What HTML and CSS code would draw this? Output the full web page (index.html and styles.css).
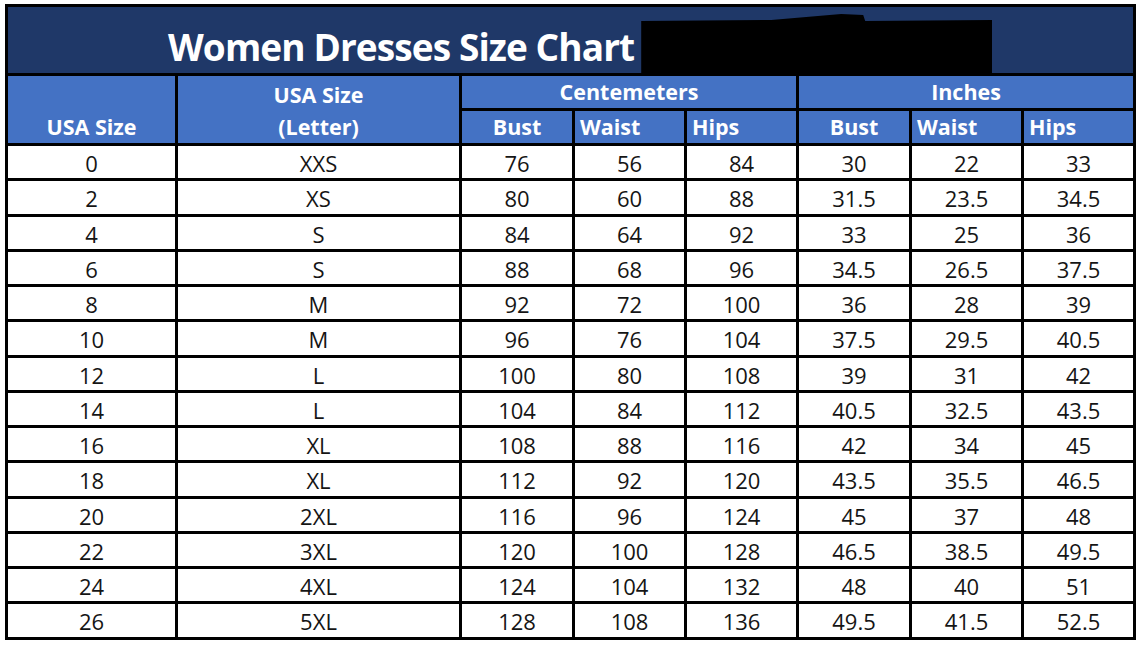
FILE: index.html
```html
<!DOCTYPE html>
<html>
<head>
<meta charset="utf-8">
<title>Women Dresses Size Chart</title>
<link rel="stylesheet" href="styles.css">
</head>
<body>
<div class="sheet">
<table class="chart">
  <colgroup>
    <col class="c-size">
    <col class="c-letter">
    <col class="c-a"><col class="c-b"><col class="c-b">
    <col class="c-a"><col class="c-b"><col class="c-b">
  </colgroup>
  <thead>
    <tr class="title-row">
      <th colspan="8" class="title"><span class="title-text">Women Dresses Size Chart</span><span class="redact"></span></th>
    </tr>
    <tr class="head-row">
      <th rowspan="2" class="h">USA Size</th>
      <th rowspan="2" class="h">USA Size<br>(Letter)</th>
      <th colspan="3" class="h">Centemeters</th>
      <th colspan="3" class="h">Inches</th>
    </tr>
    <tr class="head-row">
      <th class="h">Bust</th>
      <th class="h h-left">Waist</th>
      <th class="h h-left">Hips</th>
      <th class="h">Bust</th>
      <th class="h h-left">Waist</th>
      <th class="h h-left">Hips</th>
    </tr>
  </thead>
  <tbody>
    <tr><td>0</td><td>XXS</td><td>76</td><td>56</td><td>84</td><td>30</td><td>22</td><td>33</td></tr>
    <tr><td>2</td><td>XS</td><td>80</td><td>60</td><td>88</td><td>31.5</td><td>23.5</td><td>34.5</td></tr>
    <tr><td>4</td><td>S</td><td>84</td><td>64</td><td>92</td><td>33</td><td>25</td><td>36</td></tr>
    <tr><td>6</td><td>S</td><td>88</td><td>68</td><td>96</td><td>34.5</td><td>26.5</td><td>37.5</td></tr>
    <tr><td>8</td><td>M</td><td>92</td><td>72</td><td>100</td><td>36</td><td>28</td><td>39</td></tr>
    <tr><td>10</td><td>M</td><td>96</td><td>76</td><td>104</td><td>37.5</td><td>29.5</td><td>40.5</td></tr>
    <tr><td>12</td><td>L</td><td>100</td><td>80</td><td>108</td><td>39</td><td>31</td><td>42</td></tr>
    <tr><td>14</td><td>L</td><td>104</td><td>84</td><td>112</td><td>40.5</td><td>32.5</td><td>43.5</td></tr>
    <tr><td>16</td><td>XL</td><td>108</td><td>88</td><td>116</td><td>42</td><td>34</td><td>45</td></tr>
    <tr><td>18</td><td>XL</td><td>112</td><td>92</td><td>120</td><td>43.5</td><td>35.5</td><td>46.5</td></tr>
    <tr><td>20</td><td>2XL</td><td>116</td><td>96</td><td>124</td><td>45</td><td>37</td><td>48</td></tr>
    <tr><td>22</td><td>3XL</td><td>120</td><td>100</td><td>128</td><td>46.5</td><td>38.5</td><td>49.5</td></tr>
    <tr><td>24</td><td>4XL</td><td>124</td><td>104</td><td>132</td><td>48</td><td>40</td><td>51</td></tr>
    <tr><td>26</td><td>5XL</td><td>128</td><td>108</td><td>136</td><td>49.5</td><td>41.5</td><td>52.5</td></tr>
  </tbody>
</table>
</div>
</body>
</html>
```

FILE: styles.css
```css
html, body {
  margin: 0;
  padding: 0;
  background: #ffffff;
}

.sheet {
  padding: 4px 0 0 5px;
}

.chart {
  border-collapse: collapse;
  table-layout: fixed;
  width: 1131px;
  font-family: "Open Sans", "Liberation Sans", sans-serif;
  border: 3px solid #000;
}

.c-size { width: 170px; }
.c-letter { width: 284px; }
.c-a { width: 113px; }
.c-b { width: 112px; }

.chart th,
.chart td {
  border: 3px solid #000;
  padding: 0;
}

.title-row {
  height: 69px;
}

.chart .title {
  background: #1f3868;
  color: #fff;
  text-align: left;
  vertical-align: bottom;
  padding: 0 0 0 160px;
  white-space: nowrap;
  line-height: 50px;
}

.title-text {
  font-size: 37px;
  font-weight: 700;
  letter-spacing: -0.9px;
  vertical-align: baseline;
  position: relative;
  top: 7px;
}

.redact {
  display: inline-block;
  width: 351px;
  height: 59px;
  margin-left: 7px;
  background: #000;
  vertical-align: bottom;
  clip-path: polygon(0 7px, 130px 6px, 200px 0, 222px 1px, 224px 7px, 351px 6px, 351px 59px, 0 59px);
}

.head-row {
  height: 35px;
}

.chart .h {
  background: #4472c4;
  color: #fff;
  font-size: 21.5px;
  font-weight: 700;
  text-align: center;
  vertical-align: bottom;
  line-height: 32px;
}

.chart .h-left {
  text-align: left;
  padding-left: 5px;
}

tbody tr {
  height: 35.25px;
}

.chart td {
  text-align: center;
  font-size: 22px;
  color: #151515;
  line-height: 30px;
  vertical-align: middle;
  padding-top: 2px;
}
```
